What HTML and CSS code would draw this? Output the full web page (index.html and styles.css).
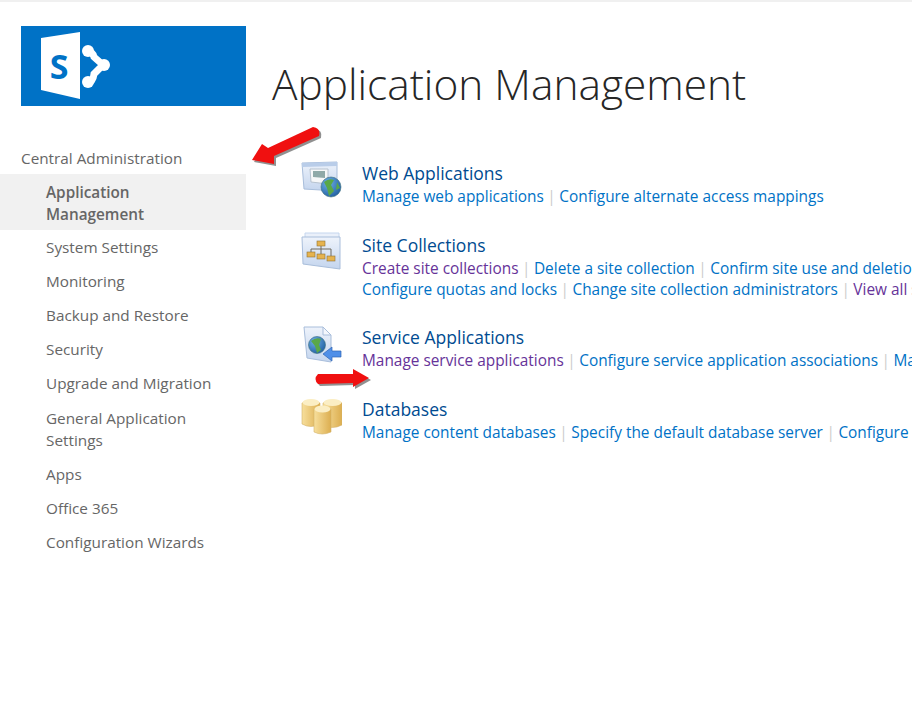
FILE: index.html
```html
<!DOCTYPE html>
<html lang="en">
<head>
    <meta charset="UTF-8">
    <meta name="viewport" content="width=device-width, initial-scale=1.0">
    <title>Application Management</title>
    <link rel="stylesheet" href="styles.css">
</head>
<body>
    <div class="page">
        <aside class="sidebar">
            <div class="logo">
                <svg width="225" height="80" viewBox="0 0 225 80">
                    <path d="M20 12 L59 6 V73 L20 64 Z" fill="#fff"/>
                    <path d="M67 26 Q72 26 73 31 L82 39 L73 48 Q72 56 67 56" fill="none" stroke="#fff" stroke-width="7"/>
                    <circle cx="67" cy="25" r="6" fill="#fff"/>
                    <circle cx="67" cy="56" r="6" fill="#fff"/>
                    <circle cx="83" cy="39" r="6" fill="#fff"/>
                    <text x="38" y="53" class="logo-s">S</text>
                </svg>
            </div>
            <div class="nav-root">Central Administration</div>
            <nav class="nav">
                <a class="nav-item selected">Application Management</a>
                <a class="nav-item">System Settings</a>
                <a class="nav-item">Monitoring</a>
                <a class="nav-item">Backup and Restore</a>
                <a class="nav-item">Security</a>
                <a class="nav-item">Upgrade and Migration</a>
                <a class="nav-item">General Application Settings</a>
                <a class="nav-item">Apps</a>
                <a class="nav-item">Office 365</a>
                <a class="nav-item">Configuration Wizards</a>
            </nav>
        </aside>

        <main class="main">
            <h1>Application Management</h1>

            <section class="group">
                <svg class="icon" width="42" height="42" viewBox="0 0 42 42">
                    <defs>
                        <linearGradient id="pane" x1="0" x2="0" y1="0" y2="1">
                            <stop offset="0" stop-color="#eef3fb"/>
                            <stop offset="1" stop-color="#c4d5ee"/>
                        </linearGradient>
                        <radialGradient id="sea" cx=".35" cy=".3" r=".8">
                            <stop offset="0" stop-color="#6fb0e6"/>
                            <stop offset="1" stop-color="#1d5c9e"/>
                        </radialGradient>
                    </defs>
                    <path d="M2 3 L37 2 V31 L4 29 Z" fill="url(#pane)" stroke="#a9bedb"/>
                    <path d="M2 3 L37 2 V6 L2 7 Z" fill="#b9cde9"/>
                    <path d="M10 9 L28 9 V24 L11 22 Z" fill="#f6f7f8" stroke="#b6c2cf"/>
                    <path d="M13 11 L25 11 V18 L13 17 Z" fill="#8fa9a8"/>
                    <circle cx="31" cy="27" r="10" fill="url(#sea)" stroke="#3c6f7c" stroke-width=".6"/>
                    <path d="M24 22 Q29 18 34 20 L31 25 L34 31 L29 36 L27 28 Z M37 22 L40 28 L36 30 Z" fill="#5aa848"/>
                </svg>
                <div class="links">
                    <h2>Web Applications</h2>
                    <p><a>Manage web applications</a><i>|</i><a>Configure alternate access mappings</a></p>
                </div>
            </section>

            <section class="group">
                <svg class="icon" width="42" height="42" viewBox="0 0 42 42">
                    <path d="M5 1 L39 1 V32 L5 30 Z" fill="#eaf0fa" stroke="#c5d6ee"/>
                    <path d="M2 5 L40 5 V37 L3 32 Z" fill="url(#pane)" stroke="#a9bedb"/>
                    <path d="M21 13 V17 M11 22 V17 H31 V25 M21 17 V24" fill="none" stroke="#6f6a5f"/>
                    <rect x="17" y="9" width="8" height="5" fill="#e6b34e" stroke="#8f7336" stroke-width=".6"/>
                    <rect x="7" y="20" width="8" height="5" fill="#e6b34e" stroke="#8f7336" stroke-width=".6"/>
                    <rect x="17" y="22" width="8" height="5" fill="#e6b34e" stroke="#8f7336" stroke-width=".6"/>
                    <rect x="27" y="24" width="8" height="5" fill="#e6b34e" stroke="#8f7336" stroke-width=".6"/>
                </svg>
                <div class="links">
                    <h2>Site Collections</h2>
                    <p><a class="visited">Create site collections</a><i>|</i><a>Delete a site collection</a><i>|</i><a>Confirm site use and deletion</a></p>
                    <p><a>Configure quotas and locks</a><i>|</i><a>Change site collection administrators</a><i>|</i><a class="visited">View all site collections</a></p>
                </div>
            </section>

            <section class="group">
                <svg class="icon" width="42" height="42" viewBox="0 0 42 42">
                    <path d="M4 3 L23 3 L31 11 V38 L7 34 Z" fill="url(#pane)" stroke="#a9bedb"/>
                    <path d="M23 3 V11 H31 Z" fill="#f4f7fc" stroke="#a9bedb"/>
                    <circle cx="17" cy="21" r="8.5" fill="url(#sea)" stroke="#3c6f7c" stroke-width=".6"/>
                    <path d="M11 17 Q16 13 21 15 L19 21 L21 26 L17 29 L15 22 Z" fill="#5aa848"/>
                    <path d="M23 30 L32 23 V27 H41 V33 H32 V37 Z" fill="#4f8fe8" stroke="#2f66b5" stroke-width=".7"/>
                </svg>
                <div class="links">
                    <h2>Service Applications</h2>
                    <p><a class="visited">Manage service applications</a><i>|</i><a>Configure service application associations</a><i>|</i><a>Manage services on server</a></p>
                </div>
            </section>

            <section class="group">
                <svg class="icon" width="42" height="42" viewBox="0 0 42 42">
                    <defs>
                        <linearGradient id="can" x1="0" x2="1" y1="0" y2="0">
                            <stop offset="0" stop-color="#f7df9c"/>
                            <stop offset="1" stop-color="#dcae50"/>
                        </linearGradient>
                    </defs>
                    <path d="M2 7 Q11 1 20 7 V28 Q11 33 2 28 Z" fill="url(#can)" stroke="#d4b26a" stroke-width=".6"/>
                    <ellipse cx="11" cy="6.500" rx="8.500" ry="3.500" fill="#fbeec4"/>
                    <path d="M23 7 Q32 1 42 7 V29 Q32 34 23 29 Z" fill="url(#can)" stroke="#d4b26a" stroke-width=".6"/>
                    <ellipse cx="32.500" cy="6.500" rx="9" ry="3.500" fill="#fbeec4"/>
                    <path d="M14 13 Q22 8 31 13 V36 Q22 40 14 36 Z" fill="url(#can)" stroke="#d4b26a" stroke-width=".6"/>
                    <ellipse cx="22.500" cy="13" rx="8" ry="3.500" fill="#fbeec4"/>
                </svg>
                <div class="links">
                    <h2>Databases</h2>
                    <p><a>Manage content databases</a><i>|</i><a>Specify the default database server</a><i>|</i><a>Configure the data retrieval service</a></p>
                </div>
            </section>
        </main>
    </div>

    <!-- red arrows pasted over the screenshot -->
    <svg class="arrow arrow-top" width="74" height="44" viewBox="0 0 74 44">
        <path d="M2 36 L12 20 L18 24 L63 3 Q71 4 69 12 L24 32 L24 40 Z" fill="#222" opacity=".5" transform="translate(2 2)"/>
        <path d="M2 36 L12 20 L18 24 L63 3 Q71 4 69 12 L24 32 L24 40 Z" fill="#f01010"/>
    </svg>
    <svg class="arrow arrow-mid" width="62" height="28" viewBox="0 0 62 28">
        <path d="M5 8 L40 8 L40 3 L56 12 L40 21 L40 17 L5 18 Q0 13 5 8 Z" fill="#222" opacity=".5" transform="translate(2 2)"/>
        <path d="M5 8 L40 8 L40 3 L56 12 L40 21 L40 17 L5 18 Q0 13 5 8 Z" fill="#f01010"/>
    </svg>
</body>
</html>
```

FILE: styles.css
```css
html, body {
    margin: 0;
    height: 100%;
    overflow: hidden;
}

body {
    font-family: "Open Sans", sans-serif;
    background: #fff;
    border-top: 2px solid #f0f0f0;
    position: relative;
}

.page {
    display: flex;
}

.sidebar {
    width: 246px;
    flex-shrink: 0;
    padding-top: 24px;
    color: #666;
}

.logo {
    margin-left: 21px;
    height: 80px;
    background: #0072c6;
}

.logo svg {
    display: block;
}

.logo-s {
    font-size: 34px;
    font-weight: 700;
    fill: #0072c6;
    text-anchor: middle;
}

.nav-root {
    margin: 41px 0 5px 21px;
    font-size: 15.3px;
    line-height: 22px;
}

.nav-item {
    display: block;
    padding: 6.1px 30px 6px 46px;
    font-size: 15.3px;
    line-height: 22px;
}

.nav-item.selected {
    background: #f1f1f1;
    font-weight: 600;
    padding-top: 7px;
    padding-bottom: 5px;
}

.main {
    flex: 1;
    min-width: 0;
    padding-left: 26px;
}

h1 {
    margin: 50px 0 44px;
    font-size: 42.4px;
    line-height: 64px;
    font-weight: 300;
    color: #262626;
    white-space: nowrap;
}

.group {
    display: flex;
    margin-bottom: 24.6px;
    margin-left: 28px;
}

.icon {
    flex-shrink: 0;
    margin-right: 20px;
    margin-top: 0;
}

.links {
    white-space: nowrap;
}

h2 {
    margin: 0;
    font-size: 17.5px;
    line-height: 26px;
    font-weight: 400;
    color: #004b91;
}

.links p {
    margin: 0;
    font-size: 15.4px;
    line-height: 21px;
}

.links a {
    color: #0072c6;
}

.links a.visited {
    color: #663399;
}

.links i {
    font-style: normal;
    color: #ccc;
    margin: 0 3.5px;
}

.arrow {
    position: absolute;
}

.arrow-top {
    left: 250px;
    top: 122px;
}

.arrow-mid {
    left: 313px;
    top: 364px;
}
```
